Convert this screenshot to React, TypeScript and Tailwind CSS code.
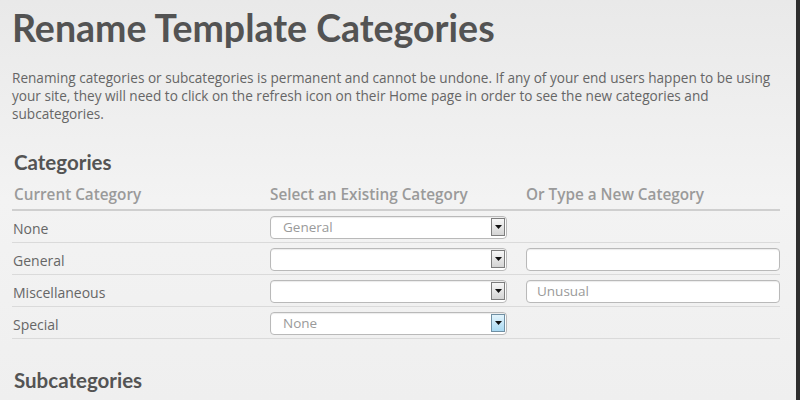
const body = { fontFamily: "'Open Sans', Arial, sans-serif" };
const heading = { fontFamily: "Lato, 'Open Sans', Arial, sans-serif" };

type Row = {
  name: string;
  selected: string;
  typed: string | null;
  focused?: boolean;
};

const rows: Row[] = [
  { name: "None", selected: "General", typed: null },
  { name: "General", selected: "", typed: "" },
  { name: "Miscellaneous", selected: "", typed: "Unusual" },
  { name: "Special", selected: "None", typed: null, focused: true },
];

function SelectBox({ value, focused }: { value: string; focused?: boolean }) {
  return (
    <div className="flex h-[23px] w-[237px] items-center justify-between rounded-[4px] border border-[#b9b9b9] bg-white pl-[12px] pr-[1px] shadow-[inset_0_1px_1px_rgba(0,0,0,0.08)]">
      <span className="text-[13.5px] text-[#9a9a9a]">{value}</span>
      <span
        className={
          focused
            ? "flex h-[18px] w-[14px] items-center justify-center border border-[#6f8fa3] bg-gradient-to-b from-[#e3f4fc] to-[#a9d9f2]"
            : "flex h-[18px] w-[14px] items-center justify-center border border-[#7d7d7d] bg-gradient-to-b from-[#f7f7f7] to-[#d4d4d4]"
        }
      >
        <svg width="7" height="4" viewBox="0 0 7 4">
          <path d="M0 0h7L3.5 4z" fill="#111" />
        </svg>
      </span>
    </div>
  );
}

function TextBox({ value }: { value: string }) {
  return (
    <div className="flex h-[23px] w-[254px] items-center rounded-[4px] border border-[#b9b9b9] bg-white px-[10px] shadow-[inset_0_1px_1px_rgba(0,0,0,0.08)]">
      <span className="text-[13.5px] text-[#9a9a9a]">{value}</span>
    </div>
  );
}

export default function App() {
  return (
    <div className="flex h-[400px] w-[800px] overflow-hidden" style={body}>
      <div className="flex-1 overflow-hidden bg-gradient-to-b from-[#e9e9e9] via-[#f3f3f3] to-[#efefef] pl-[12px] pr-[8px]">
        <h1 className="pt-[6px] text-[37.5px] font-bold leading-[44px] text-[#535353]" style={heading}>
          Rename Template Categories
        </h1>
        <p className="mt-[19px] whitespace-nowrap text-[13.6px] leading-[18px] text-[#666]">
          Renaming categories or subcategories is permanent and cannot be undone. If any of your end users happen to be using
          <br />
          your site, they will need to click on the refresh icon on their Home page in order to see the new categories and
          <br />
          subcategories.
        </p>

        <h2 className="mt-[27px] pl-[2px] text-[20.5px] font-bold leading-[24px] text-[#545454]" style={heading}>
          Categories
        </h2>

        <div className="mt-[9px] w-[768px]">
          <div className="grid grid-cols-[258px_256px_1fr] border-b-2 border-[#cfcfcf] pb-[4px] text-[15.3px] font-semibold leading-[22px] text-[#9a9a9a]">
            <div className="pl-[2px]">Current Category</div>
            <div>Select an Existing Category</div>
            <div>Or Type a New Category</div>
          </div>
          {rows.map((r) => (
            <div
              key={r.name}
              className="grid h-[32px] grid-cols-[258px_256px_1fr] items-center border-b border-[#dadada]"
            >
              <div className="pl-[1px] pt-[3px] text-[14px] text-[#666]">{r.name}</div>
              <div className="pt-[1px]">
                <SelectBox value={r.selected} focused={r.focused} />
              </div>
              <div className="pt-[1px]">{r.typed !== null ? <TextBox value={r.typed} /> : null}</div>
            </div>
          ))}
        </div>

        <h2 className="mt-[29px] pl-[2px] text-[20.5px] font-bold leading-[24px] text-[#545454]" style={heading}>
          Subcategories
        </h2>
      </div>
      <div className="w-[4px] bg-[#2e2e2e]" />
    </div>
  );
}
